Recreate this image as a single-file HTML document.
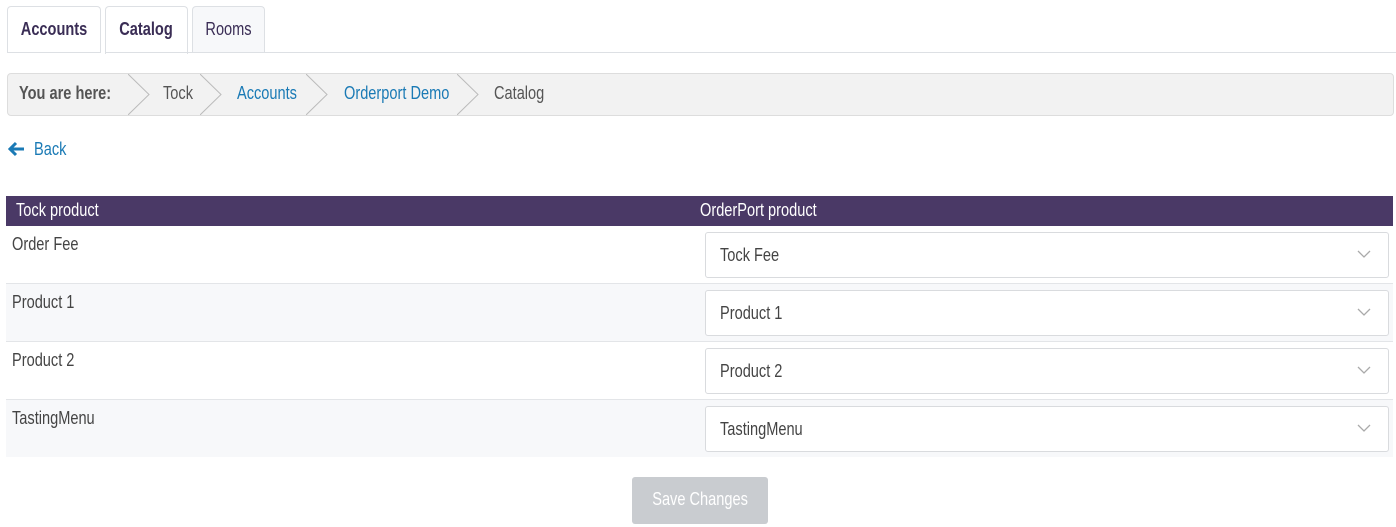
<!DOCTYPE html>
<html><head><style>
*{box-sizing:border-box;margin:0;padding:0}
body{width:1396px;height:527px;background:#fff;font-family:"Liberation Sans",sans-serif;font-size:18px;color:#444;position:relative;overflow:hidden}
.a{position:absolute}
.t{display:inline-block;transform:scaleX(.81);transform-origin:left center;white-space:nowrap}
.c{display:inline-block;transform:scaleX(.81);transform-origin:center center;white-space:nowrap}
.tab{position:absolute;top:6px;height:47px;border:1px solid #dde0e4;border-bottom:none;border-radius:4px 4px 0 0;text-align:center;line-height:44px;color:#3a2d55}
.bc{left:7px;top:73px;width:1387px;height:43px;background:#f2f2f2;border:1px solid #ddd;border-radius:4px}
.chev{position:absolute;top:0;width:22px;height:41px}
.row{position:absolute;left:6px;width:1387px;height:58px;border-bottom:1px solid #e3e5e8}
.sel{position:absolute;left:699px;top:6px;width:684px;height:46px;background:#fff;border:1px solid #d9dbde;border-radius:3px;line-height:44px;padding-left:14px;color:#444}
.sel svg{position:absolute;right:17px;top:17px}
.lbl{position:absolute;left:6px;top:8px}
</style></head><body>
<div class="tab" style="left:7px;width:94px;font-weight:bold"><span class="c">Accounts</span></div>
<div class="tab" style="left:105px;width:83px;font-weight:bold;background:#fff;height:48px"><span class="c">Catalog</span></div>
<div class="tab" style="left:192px;width:73px;background:#f7f8fa"><span class="c">Rooms</span></div>
<div class="a" style="left:7px;top:52px;width:1389px;height:1px;background:#dde0e4"></div>
<div class="a" style="left:101px;top:52px;width:4px;height:1px;background:#fff"></div>
<div class="a bc">
<span class="a t" style="left:11px;top:9px;font-weight:bold;color:#555">You are here:</span>
<svg class="chev" style="left:120px" viewBox="0 0 22 41"><path d="M0 0L21 20.5L0 41" fill="none" stroke="#bbb"/></svg>
<span class="a t" style="left:155px;top:9px;color:#555">Tock</span>
<svg class="chev" style="left:192px" viewBox="0 0 22 41"><path d="M0 0L21 20.5L0 41" fill="none" stroke="#bbb"/></svg>
<span class="a t" style="left:229px;top:9px;color:#1a7ab5">Accounts</span>
<svg class="chev" style="left:298px" viewBox="0 0 22 41"><path d="M0 0L21 20.5L0 41" fill="none" stroke="#bbb"/></svg>
<span class="a t" style="left:336px;top:9px;color:#1a7ab5">Orderport Demo</span>
<svg class="chev" style="left:449px" viewBox="0 0 22 41"><path d="M0 0L21 20.5L0 41" fill="none" stroke="#bbb"/></svg>
<span class="a t" style="left:486px;top:9px;color:#555">Catalog</span>
</div>
<svg class="a" style="left:7px;top:141px" width="18" height="16" viewBox="0 0 18 16"><path d="M17 8H3M9 2L3 8L9 14" fill="none" stroke="#1a7ab5" stroke-width="3"/></svg>
<span class="a t" style="left:34px;top:139px;color:#1a7ab5">Back</span>
<div class="a" style="left:6px;top:196px;width:1387px;height:30px;background:#4a3966;color:#fff">
<span class="a t" style="left:10px;top:4px">Tock product</span>
<span class="a t" style="left:694px;top:4px">OrderPort product</span></div>
<div class="row" style="top:226px;background:#fff"><span class="lbl t">Order Fee</span><div class="sel"><span class="t">Tock Fee</span><svg width="14" height="8"><path d="M1 1L7 7L13 1" fill="none" stroke="#aaa" stroke-width="1.3"/></svg></div></div>
<div class="row" style="top:284px;background:#f7f8fa"><span class="lbl t">Product 1</span><div class="sel"><span class="t">Product 1</span><svg width="14" height="8"><path d="M1 1L7 7L13 1" fill="none" stroke="#aaa" stroke-width="1.3"/></svg></div></div>
<div class="row" style="top:342px;background:#fff"><span class="lbl t">Product 2</span><div class="sel"><span class="t">Product 2</span><svg width="14" height="8"><path d="M1 1L7 7L13 1" fill="none" stroke="#aaa" stroke-width="1.3"/></svg></div></div>
<div class="row" style="top:400px;background:#f7f8fa;border-bottom:none;height:57px"><span class="lbl t">TastingMenu</span><div class="sel"><span class="t">TastingMenu</span><svg width="14" height="8"><path d="M1 1L7 7L13 1" fill="none" stroke="#aaa" stroke-width="1.3"/></svg></div></div>
<div class="a" style="left:632px;top:477px;width:136px;height:47px;background:#c9ccd0;border-radius:3px;color:#fff;text-align:center;line-height:45px"><span class="c">Save Changes</span></div>
</body></html>
